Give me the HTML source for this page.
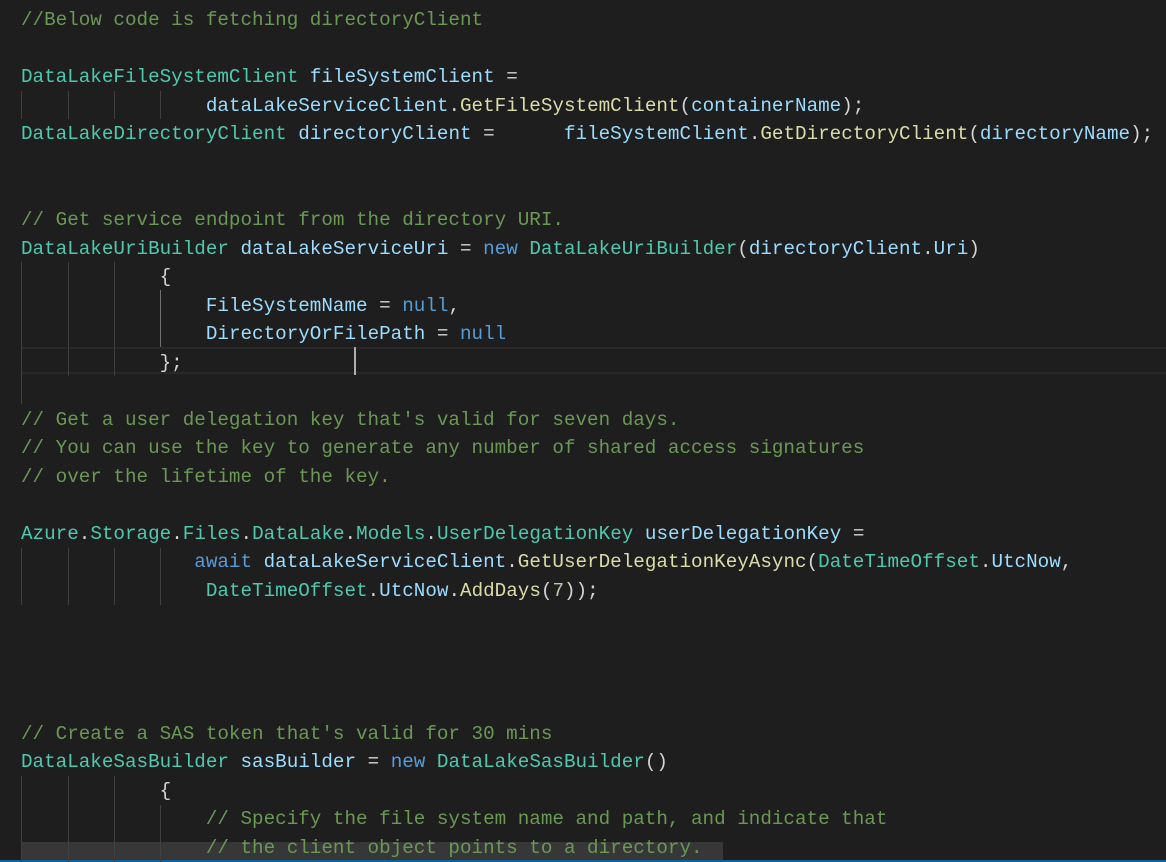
<!DOCTYPE html>
<html><head><meta charset="utf-8"><style>
html,body{margin:0;padding:0;}
body{width:1166px;height:862px;background:#1e1e1e;position:relative;overflow:hidden;
font-family:"Liberation Mono",monospace;font-size:19.25px;color:#d4d4d4;}
.l{position:absolute;left:21px;white-space:pre;height:28.57px;line-height:28.57px;margin-top:1px;}
.t{color:#4ec9b0}.v{color:#9cdcfe}.k{color:#569cd6}.m{color:#dcdcaa}.c{color:#6a9955}.n{color:#b5cea8}
.g{position:absolute;width:1px;background:#404040;}
.ga{background:#707070;}
</style></head><body>
<div style="position:absolute;left:21px;top:347px;width:1145px;height:27px;border-top:2px solid #282828;border-bottom:2px solid #282828;box-sizing:border-box;"></div>
<div style="position:absolute;left:21px;top:842px;width:702px;height:20px;background:#3c3c3c;opacity:.85"></div>
<div style="position:absolute;left:0;top:860px;width:1166px;height:2px;background:#0e639c"></div>
<div style="position:absolute;left:354px;top:347px;width:2px;height:28px;background:#aeafad"></div>

<div class="g" style="left:21px;top:91px;height:28px"></div>
<div class="g" style="left:68px;top:91px;height:28px"></div>
<div class="g" style="left:114px;top:91px;height:28px"></div>
<div class="g" style="left:160px;top:91px;height:28px"></div>

<div class="g" style="left:21px;top:262px;height:142px"></div>
<div class="g" style="left:68px;top:262px;height:114px"></div>
<div class="g" style="left:114px;top:262px;height:114px"></div>
<div class="g ga" style="left:160px;top:290px;height:57px"></div>

<div class="g" style="left:21px;top:548px;height:57px"></div>
<div class="g" style="left:68px;top:548px;height:57px"></div>
<div class="g" style="left:114px;top:548px;height:57px"></div>
<div class="g" style="left:160px;top:548px;height:57px"></div>

<div class="g" style="left:21px;top:776px;height:86px"></div>
<div class="g" style="left:68px;top:776px;height:86px"></div>
<div class="g" style="left:114px;top:776px;height:86px"></div>
<div class="g" style="left:160px;top:805px;height:57px"></div>

<div class="l c" style="top:5px">//Below code is fetching directoryClient</div>
<div class="l" style="top:62px"><span class="t">DataLakeFileSystemClient</span> <span class="v">fileSystemClient</span> =</div>
<div class="l" style="top:90.5px">                <span class="v">dataLakeServiceClient</span>.<span class="m">GetFileSystemClient</span>(<span class="v">containerName</span>);</div>
<div class="l" style="top:119px"><span class="t">DataLakeDirectoryClient</span> <span class="v">directoryClient</span> =      <span class="v">fileSystemClient</span>.<span class="m">GetDirectoryClient</span>(<span class="v">directoryName</span>);</div>
<div class="l c" style="top:205px">// Get service endpoint from the directory URI.</div>
<div class="l" style="top:233.5px"><span class="t">DataLakeUriBuilder</span> <span class="v">dataLakeServiceUri</span> = <span class="k">new</span> <span class="t">DataLakeUriBuilder</span>(<span class="v">directoryClient</span>.<span class="v">Uri</span>)</div>
<div class="l" style="top:262px">            {</div>
<div class="l" style="top:290.5px">                <span class="v">FileSystemName</span> = <span class="k">null</span>,</div>
<div class="l" style="top:319px">                <span class="v">DirectoryOrFilePath</span> = <span class="k">null</span></div>
<div class="l" style="top:347.5px">            };</div>
<div class="l c" style="top:404.5px">// Get a user delegation key that's valid for seven days.</div>
<div class="l c" style="top:433px">// You can use the key to generate any number of shared access signatures</div>
<div class="l c" style="top:461.5px">// over the lifetime of the key.</div>
<div class="l" style="top:518.5px"><span class="t">Azure</span>.<span class="t">Storage</span>.<span class="t">Files</span>.<span class="t">DataLake</span>.<span class="t">Models</span>.<span class="t">UserDelegationKey</span> <span class="v">userDelegationKey</span> =</div>
<div class="l" style="top:547px">               <span class="k">await</span> <span class="v">dataLakeServiceClient</span>.<span class="m">GetUserDelegationKeyAsync</span>(<span class="t">DateTimeOffset</span>.<span class="v">UtcNow</span>,</div>
<div class="l" style="top:575.5px">                <span class="t">DateTimeOffset</span>.<span class="v">UtcNow</span>.<span class="m">AddDays</span>(<span class="n">7</span>));</div>
<div class="l c" style="top:718.5px">// Create a SAS token that's valid for 30 mins</div>
<div class="l" style="top:747px"><span class="t">DataLakeSasBuilder</span> <span class="v">sasBuilder</span> = <span class="k">new</span> <span class="t">DataLakeSasBuilder</span>()</div>
<div class="l" style="top:775.5px">            {</div>
<div class="l c" style="top:804px">                // Specify the file system name and path, and indicate that</div>
<div class="l c" style="top:832.5px">                // the client object points to a directory.</div>
</body></html>
